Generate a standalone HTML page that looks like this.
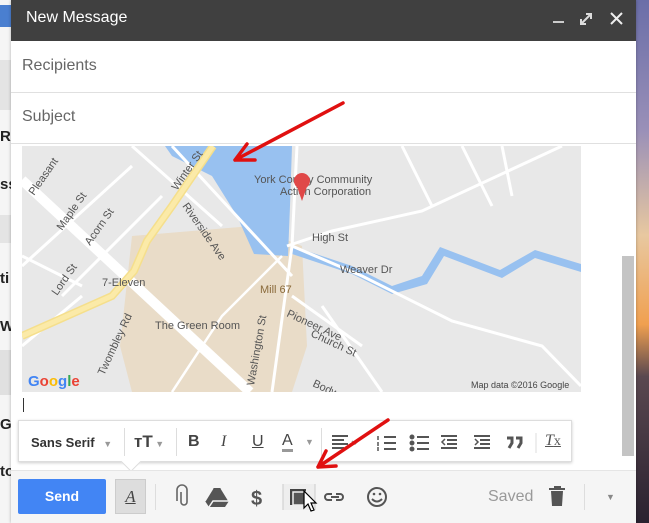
<!DOCTYPE html>
<html><head><meta charset="utf-8"><style>
*{margin:0;padding:0;box-sizing:border-box}
body{width:649px;height:523px;overflow:hidden;position:relative;background:#fff;font-family:"Liberation Sans",Arial,sans-serif}
.abs{position:absolute}
</style></head><body>
<div class="abs" style="left:0;top:0;width:12px;height:523px;background:#f5f5f5"></div>
<div class="abs" style="left:0;top:5px;width:12px;height:22px;background:#4a7fd0"></div>
<div class="abs" style="left:0;top:60px;width:12px;height:50px;background:#e4e4e4"></div>
<div class="abs" style="left:0;top:215px;width:12px;height:28px;background:#e4e4e4"></div>
<div class="abs" style="left:0;top:350px;width:12px;height:45px;background:#e0e0e0"></div>
<div class="abs" style="left:0;top:128px;font-size:15px;font-weight:bold;color:#222">Re</div>
<div class="abs" style="left:0;top:176px;font-size:15px;font-weight:bold;color:#222">ss</div>
<div class="abs" style="left:0;top:270px;font-size:15px;font-weight:bold;color:#222">ti</div>
<div class="abs" style="left:0;top:318px;font-size:15px;font-weight:bold;color:#222">W</div>
<div class="abs" style="left:0;top:416px;font-size:15px;font-weight:bold;color:#222">Go</div>
<div class="abs" style="left:0;top:463px;font-size:15px;font-weight:bold;color:#222">to</div>
<div class="abs" style="left:636px;top:0;width:13px;height:523px;background:linear-gradient(#6a6ea8 0%,#9a90b8 25%,#e8c8a0 45%,#f0a050 62%,#5a4850 72%,#2a2230 100%)"></div>
<div class="abs" style="left:11px;top:0;width:625px;height:523px;background:#fff;box-shadow:0 0 3px rgba(0,0,0,.3)"></div>
<div class="abs" style="left:11px;top:0;width:625px;height:41px;background:#404040"></div>
<div class="abs" style="left:26px;top:9px;color:#fff;font-size:16px">New Message</div>
<div class="abs" style="left:553px;top:21px;width:11px;height:2px;background:#ccc"></div>
<svg class="abs" style="left:578px;top:11px" width="16" height="16" viewBox="0 0 16 16"><path d="M3 13L13 3M8 3h5v5M3 8v5h5" stroke="#ddd" stroke-width="2" fill="none"/></svg>
<svg class="abs" style="left:610px;top:12px" width="13" height="13" viewBox="0 0 13 13"><path d="M1 1L12 12M12 1L1 12" stroke="#eee" stroke-width="2"/></svg>
<div class="abs" style="left:22px;top:57px;color:#666;font-size:16px">Recipients</div>
<div class="abs" style="left:11px;top:92px;width:625px;height:1px;background:#e0e0e0"></div>
<div class="abs" style="left:22px;top:108px;color:#666;font-size:16px">Subject</div>
<div class="abs" style="left:11px;top:143px;width:625px;height:1px;background:#e0e0e0"></div>
<svg class="abs" style="left:22px;top:146px" width="559" height="246" viewBox="0 0 559 246" font-family="Liberation Sans,Arial,sans-serif">
<rect width="559" height="246" fill="#e8e8e8"/>
<path d="M110 90 L230 80 L280 100 L285 200 L270 246 L110 246 L98 200Z" fill="#e9dcc8"/>
<path d="M143 0 L270 0 L268 60 L266 110 L232 108 L215 70 L190 30 L150 10Z" fill="#98c1f0"/>
<path d="M270 100 L330 120 L370 140 L400 130 L418 101 L478 124 L513 104 L559 118 L559 126 L513 112 L480 132 L422 110 L405 138 L370 148 L330 128 L270 108Z" fill="#98c1f0"/>
<g stroke="#fff" fill="none">
<path d="M0 34 L228 246" stroke-width="10"/>
<path d="M0 120 L110 20 M40 150 L140 50 M0 200 L60 150 M110 0 L200 80 M150 0 L270 130 M0 110 L60 140" stroke-width="3"/>
<path d="M275 0 L270 100 L250 246 M265 100 L310 85 L400 65 L540 0 M270 100 L340 130 L430 175 L520 200 L559 240 M300 160 L360 246 M270 150 L340 200 M440 0 L470 60 M480 0 L490 50 M380 0 L410 60" stroke-width="3"/>
<path d="M150 246 L200 170 L260 110" stroke-width="2.5"/>
</g>
<path d="M191 0 L150 60 L125 95 L112 125 L90 150 L0 190" stroke="#f5df8c" stroke-width="8" fill="none"/>
<path d="M191 0 L150 60 L125 95 L112 125 L90 150 L0 190" stroke="#fbeaa8" stroke-width="5" fill="none"/>
<g fill="#555" font-size="11">
<text x="232" y="37">York County Community</text><text x="258" y="49">Action Corporation</text>
<text x="290" y="95">High St</text><text x="318" y="127">Weaver Dr</text>
<text x="238" y="147" fill="#8a6a3a">Mill 67</text>
<text x="80" y="140">7-Eleven</text><text x="133" y="183">The Green Room</text>
<text x="264" y="170" transform="rotate(25 264 170)">Pioneer Ave</text>
<text x="288" y="190" transform="rotate(25 288 190)">Church St</text>
<text x="160" y="60" transform="rotate(55 160 60)">Riverside Ave</text>
<text x="155" y="45" transform="rotate(-55 155 45)">Winter St</text>
<text x="40" y="85" transform="rotate(-55 40 85)">Maple St</text>
<text x="68" y="100" transform="rotate(-55 68 100)">Acorn St</text>
<text x="35" y="150" transform="rotate(-55 35 150)">Lord St</text>
<text x="12" y="50" transform="rotate(-55 12 50)">Pleasant</text>
<text x="82" y="230" transform="rotate(-65 82 230)">Twombley Rd</text>
<text x="232" y="240" transform="rotate(-80 232 240)">Washington St</text>
<text x="290" y="240" transform="rotate(25 290 240)">Bodwell St</text>
</g>
<path d="M280 27 a8 8 0 1 1 -0.1 0Z" fill="#e04848"/><path d="M272 32 L280 55 L288 32Z" fill="#e04848"/>
<text x="6" y="240" font-size="15" font-weight="bold"><tspan fill="#4285f4">G</tspan><tspan fill="#ea4335">o</tspan><tspan fill="#fbbc05">o</tspan><tspan fill="#4285f4">g</tspan><tspan fill="#34a853">l</tspan><tspan fill="#ea4335">e</tspan></text>
<text x="449" y="242" font-size="9" fill="#444">Map data ©2016 Google</text>
</svg>
<div class="abs" style="left:23px;top:398px;width:1px;height:14px;background:#333"></div>
<div class="abs" style="left:622px;top:256px;width:12px;height:200px;background:#c4c4c4"></div>
<!-- format toolbar -->
<div class="abs" style="left:18px;top:420px;width:554px;height:42px;border:1px solid #ddd;background:#fff;box-shadow:0 1px 3px rgba(0,0,0,.2)"></div>
<div class="abs" style="left:124px;top:455px;width:14px;height:14px;background:#fff;transform:rotate(45deg);border-right:1px solid #ddd;border-bottom:1px solid #ddd"></div>
<div class="abs" style="left:31px;top:435px;font-size:13px;font-weight:bold;color:#333">Sans Serif <span style="color:#999;font-size:9px">&nbsp;&nbsp;▼</span></div>
<div class="abs" style="left:124px;top:428px;height:28px;width:1px;background:#ddd"></div>
<div class="abs" style="left:134px;top:432px;font-size:17px;font-weight:bold;color:#444">ᴛT<span style="color:#999;font-size:9px"> ▼</span></div>
<div class="abs" style="left:176px;top:428px;height:28px;width:1px;background:#ddd"></div>
<div class="abs" style="left:188px;top:433px;font-size:16px;font-weight:bold;color:#444">B</div>
<div class="abs" style="left:221px;top:433px;font-size:16px;font-style:italic;font-family:'Liberation Serif',serif;color:#444">I</div>
<div class="abs" style="left:252px;top:433px;font-size:16px;text-decoration:underline;color:#444">U</div>
<div class="abs" style="left:282px;top:432px;font-size:16px;color:#444;border-bottom:3px solid #999;line-height:17px">A</div>
<div class="abs" style="left:305px;top:437px;font-size:9px;color:#999">▼</div>
<div class="abs" style="left:321px;top:428px;height:28px;width:1px;background:#ddd"></div>
<svg class="abs" style="left:330px;top:433px" width="220" height="20" viewBox="0 0 220 20" stroke="#555" stroke-width="2" fill="none">
<path d="M2 3h16M2 7h12M2 11h16M2 15h12"/><path d="M22 8l3 3 3-3" stroke="#999" stroke-width="1.5"/>
<path d="M54 4h12M54 10h12M54 16h12"/><path d="M48 3v4M48 9v4M48 14v4" stroke-width="1.5"/>
<path d="M87 4h12M87 10h12M87 16h12"/><circle cx="82" cy="4" r="1.5" fill="#555"/><circle cx="82" cy="10" r="1.5" fill="#555"/><circle cx="82" cy="16" r="1.5" fill="#555"/>
<path d="M111 3h16M117 7h10M117 11h10M111 15h16"/><path d="M115 6l-3 3 3 3" stroke-width="1.5"/>
<path d="M144 3h16M150 7h10M150 11h10M144 15h16"/><path d="M145 6l3 3-3 3" stroke-width="1.5"/>
<path d="M177 5h5v5l-3 5M186 5h5v5l-3 5" stroke-width="3"/>
<path d="M206 -2v24" stroke="#ddd" stroke-width="1"/>
</svg>
<div class="abs" style="left:545px;top:432px;font-size:16px;font-style:italic;color:#555;font-family:'Liberation Serif',serif;text-decoration:underline">T<span style="font-style:normal;font-size:14px;text-decoration:none">x</span></div>
<!-- bottom bar -->
<div class="abs" style="left:11px;top:470px;width:625px;height:53px;background:#f5f5f5;border-top:1px solid #e5e5e5"></div>
<div class="abs" style="left:18px;top:479px;width:88px;height:35px;background:#4285f4;border-radius:2px;color:#fff;font-weight:bold;font-size:14px;text-align:center;line-height:35px">Send</div>
<div class="abs" style="left:115px;top:479px;width:31px;height:35px;background:#ddd;border:1px solid #ccc;text-align:center;font-family:'Liberation Serif',serif;font-style:italic;font-size:17px;line-height:33px;color:#444;text-decoration:underline">A</div>
<div class="abs" style="left:155px;top:484px;width:1px;height:26px;background:#ddd"></div>
<svg class="abs" style="left:170px;top:484px" width="230" height="26" viewBox="0 0 230 26">
<path d="M11 8v10a3 3 0 0 0 6 0V6a5 5 0 0 0-10 0v11" stroke="#666" stroke-width="1.6" fill="none"/>
<path d="M43 4h8l8 13-4 6H39l-4-6Z" fill="#555"/><path d="M43 4l-8 13M51 4l8 13M39 23l4-6h16" stroke="#f5f5f5" stroke-width="1.5" fill="none"/>
<text x="81" y="21" font-size="20" font-weight="bold" fill="#555" font-family="Liberation Sans">$</text>
<rect x="113" y="-1" width="32" height="28" fill="#eee" stroke="#ccc"/>
<rect x="120" y="5" width="16" height="16" fill="#444"/><rect x="123" y="8" width="14" height="13" fill="#555" stroke="#eee" stroke-width="1.5"/>
<path d="M161 13h8M158 10a3 3 0 0 0 0 6h4M166 10h4a3 3 0 0 1 0 6h-4M158 10h4" stroke="#555" stroke-width="2" fill="none"/>
<circle cx="207" cy="13" r="9" stroke="#555" stroke-width="2" fill="none"/><circle cx="204" cy="10" r="1.3" fill="#555"/><circle cx="210" cy="10" r="1.3" fill="#555"/><path d="M202 15q5 5 10 0" stroke="#555" stroke-width="2" fill="none"/>
</svg>
<svg class="abs" style="left:302px;top:490px" width="16" height="24" viewBox="0 0 16 24"><path d="M2 1v17l4-4 3 7 3-1-3-7h5Z" fill="#fff" stroke="#000" stroke-width="1.2"/></svg>
<div class="abs" style="left:488px;top:488px;font-size:16px;color:#999">Saved</div>
<svg class="abs" style="left:548px;top:486px" width="18" height="20" viewBox="0 0 18 20"><path d="M1 3h16M6 1h6v2" stroke="#555" stroke-width="2" fill="none"/><path d="M3 5h12l-1 15H4Z" fill="#555"/></svg>
<div class="abs" style="left:584px;top:484px;width:1px;height:26px;background:#ddd"></div>
<div class="abs" style="left:606px;top:492px;font-size:9px;color:#888">▼</div>
<svg class="abs" style="left:0;top:0" width="649" height="523">
<g stroke="#e01010" stroke-width="3.5" fill="none" stroke-linecap="round">
<path d="M343 103L235 160M235 160l12-16M235 160l20 0"/>
<path d="M388 420L318 467M318 467l8-16M318 467l18-1"/>
</g></svg>
</body></html>
